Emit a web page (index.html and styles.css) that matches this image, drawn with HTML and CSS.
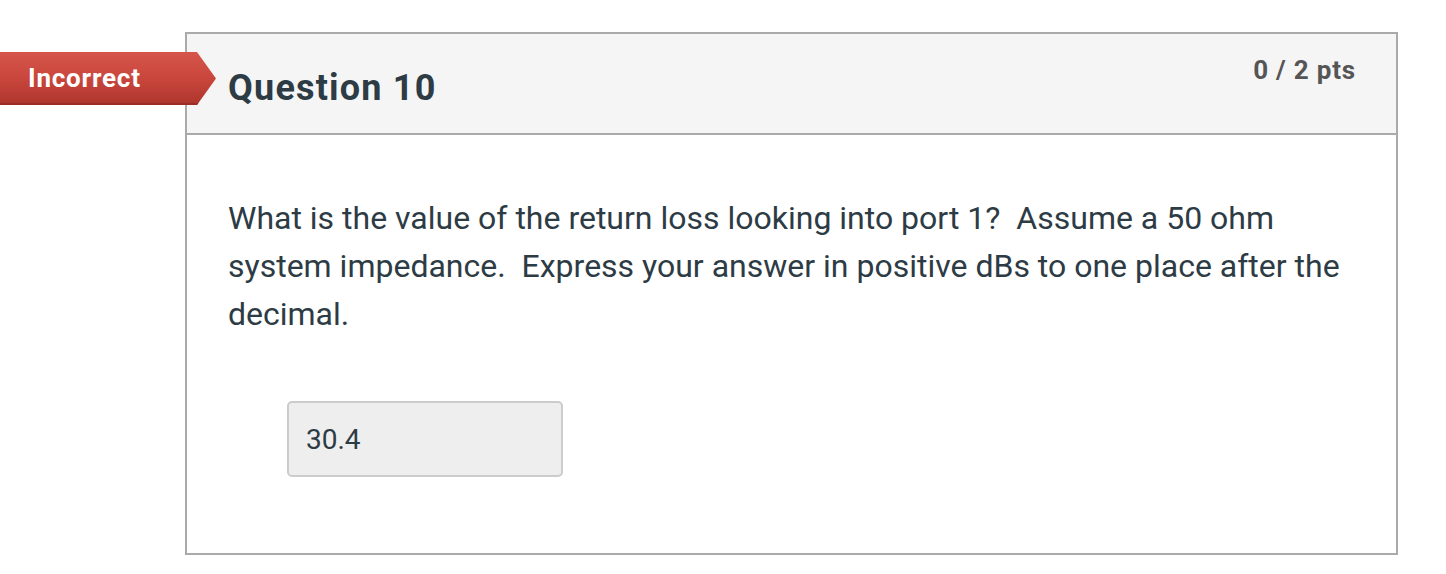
FILE: index.html
```html
<!DOCTYPE html>
<html>
<head>
<meta charset="utf-8">
<link rel="stylesheet" href="styles.css">
</head>
<body>
<div class="page">
  <div class="badge"><span class="badge-text">Incorrect</span></div>
  <div class="card">
    <div class="card-header">
      <h2 class="title">Question 10</h2>
      <div class="pts">0 / 2 pts</div>
    </div>
    <div class="card-body">
      <p class="question">What is the value of the return loss looking into port 1?&nbsp; Assume a 50 ohm system impedance.&nbsp; Express your answer in positive dBs to one place after the decimal.</p>
      <div class="answer">30.4</div>
    </div>
  </div>
</div>
</body>
</html>
```

FILE: styles.css
```css
html, body {
  margin: 0;
  padding: 0;
  background: #ffffff;
  font-family: Roboto, "Liberation Sans", Arial, sans-serif;
  color: #2d3b45;
}

.page {
  position: relative;
  padding-top: 32px;
  padding-left: 185px;
  width: 1213px;
}

.badge {
  position: absolute;
  left: 0;
  top: 52px;
  width: 216px;
  height: 53px;
  background: linear-gradient(to bottom, #d6564c 0%, #c9463c 50%, #ad352d 100%);
  clip-path: polygon(0 0, 197px 0, 216px 50%, 197px 100%, 0 100%);
  box-shadow: inset 0 -2px 0 #9a2e27;
  display: flex;
  align-items: center;
  z-index: 2;
}

.badge-text {
  margin-left: 28px;
  color: #ffffff;
  font-weight: 700;
  font-size: 26px;
  letter-spacing: 0.8px;
  margin-top: -1px;
}

.card {
  border: 2px solid #aaaaaa;
  background: #ffffff;
}

.card-header {
  box-sizing: border-box;
  height: 101px;
  background: #f5f5f5;
  border-bottom: 2px solid #aaaaaa;
  display: flex;
  justify-content: space-between;
  align-items: flex-start;
  padding: 17px 40px 0 41px;
}

.title {
  margin: 16px 0 0 0;
  font-size: 36px;
  line-height: 1.2;
  font-weight: 700;
  letter-spacing: 1.2px;
  color: #2d3b45;
}

.pts {
  font-size: 26px;
  line-height: 1.5;
  font-weight: 700;
  letter-spacing: 0.8px;
  color: #555555;
}

.card-body {
  padding: 59px 41px 76px 41px;
}

.question {
  margin: 0;
  font-size: 32px;
  line-height: 48px;
  color: #2d3b45;
}

.answer {
  box-sizing: border-box;
  margin: 63px 0 0 59px;
  width: 276px;
  height: 76px;
  background: #eeeeee;
  border: 2px solid #cccccc;
  border-radius: 5px;
  display: flex;
  align-items: center;
  padding-left: 17px;
  font-size: 28px;
  color: #2d3b45;
}
```
